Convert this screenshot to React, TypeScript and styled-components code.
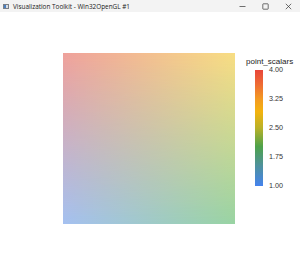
import React from "react";
import styled, { createGlobalStyle } from "styled-components";

const GlobalStyle = createGlobalStyle`
  html, body {
    margin: 0;
    padding: 0;
    background: #ffffff;
  }
  * {
    box-sizing: border-box;
  }
`;

const Window = styled.div`
  width: 300px;
  height: 266px;
  display: flex;
  flex-direction: column;
  background: #ffffff;
  overflow: hidden;
`;

const TitleBar = styled.div`
  height: 12px;
  flex: none;
  display: flex;
  align-items: center;
  background: #f3f3f3;
  padding-left: 3px;
`;

const AppIcon = styled.span`
  width: 6px;
  height: 5px;
  border: 1px solid #7a7f86;
  background: linear-gradient(90deg, #4a7fc0 0 40%, #d9dde2 40%);
  margin-right: 4px;
`;

const Title = styled.span`
  font-family: "Open Sans", "Noto Sans", sans-serif;
  font-size: 6.4px;
  color: #1a1a1a;
  white-space: nowrap;
  flex: 1;
`;

const Controls = styled.div`
  display: flex;
  height: 100%;
`;

const ControlButton = styled.div`
  width: 23px;
  height: 100%;
  display: flex;
  align-items: center;
  justify-content: center;
`;

const Canvas = styled.div`
  flex: 1;
  display: flex;
  align-items: flex-start;
  padding: 41px 0 0 63px;
  background: #ffffff;
`;

const Plane = styled.div`
  position: relative;
  width: 172px;
  height: 171px;
  background: linear-gradient(90deg, #a5c1f1, #99d4a3);
  &::after {
    content: "";
    position: absolute;
    inset: 0;
    background: linear-gradient(90deg, #efa19b, #f8dd83);
    -webkit-mask-image: linear-gradient(180deg, #000, transparent);
    mask-image: linear-gradient(180deg, #000, transparent);
  }
`;

const Legend = styled.div`
  margin: 5px 0 0 11px;
  display: flex;
  flex-direction: column;
  font-family: "Liberation Sans", Arial, sans-serif;
  color: #222;
`;

const LegendTitle = styled.div`
  font-size: 8px;
  line-height: 8px;
  white-space: nowrap;
`;

const Scale = styled.div`
  display: flex;
  margin: 4px 0 0 9px;
`;

const Bar = styled.div`
  width: 8px;
  height: 116px;
  background: linear-gradient(
    180deg,
    #e8463a 0%,
    #ee6a34 12%,
    #f39a22 25%,
    #f3b30e 36%,
    #b9b128 50%,
    #4ea24a 66%,
    #4f929a 82%,
    #4583ee 100%
  );
`;

const Ticks = styled.div`
  height: 124px;
  margin: -4px 0 0 6px;
  display: flex;
  flex-direction: column;
  justify-content: space-between;
`;

const Tick = styled.div`
  font-size: 7.2px;
  line-height: 8px;
  color: #333;
`;

const labels = ["4.00", "3.25", "2.50", "1.75", "1.00"];

const App = () => {
  return (
    <>
      <GlobalStyle />
      <Window>
        <TitleBar>
          <AppIcon />
          <Title>Visualization Toolkit - Win32OpenGL #1</Title>
          <Controls>
            <ControlButton>
              <svg width="7" height="7" viewBox="0 0 7 7">
                <line x1="0.5" y1="3.5" x2="6.5" y2="3.5" stroke="#333" strokeWidth="0.7" />
              </svg>
            </ControlButton>
            <ControlButton>
              <svg width="7" height="7" viewBox="0 0 7 7">
                <rect x="0.8" y="0.8" width="5.4" height="5.4" rx="0.6" fill="none" stroke="#333" strokeWidth="0.7" />
              </svg>
            </ControlButton>
            <ControlButton>
              <svg width="7" height="7" viewBox="0 0 7 7">
                <path d="M0.8 0.8 L6.2 6.2 M6.2 0.8 L0.8 6.2" stroke="#333" strokeWidth="0.7" />
              </svg>
            </ControlButton>
          </Controls>
        </TitleBar>
        <Canvas>
          <Plane />
          <Legend>
            <LegendTitle>point_scalars</LegendTitle>
            <Scale>
              <Bar />
              <Ticks>
                {labels.map((l) => (
                  <Tick key={l}>{l}</Tick>
                ))}
              </Ticks>
            </Scale>
          </Legend>
        </Canvas>
      </Window>
    </>
  );
};

export default App;
